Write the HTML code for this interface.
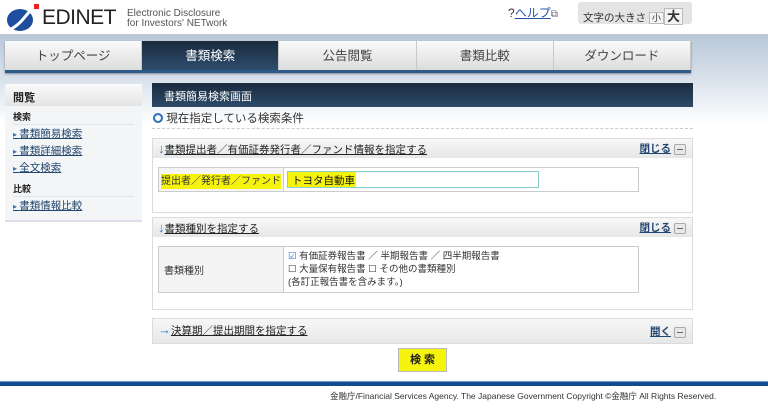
<!DOCTYPE html>
<html><head><meta charset="utf-8"><style>
*{margin:0;padding:0;box-sizing:border-box}
body{width:768px;height:419px;overflow:hidden;font-family:"Liberation Sans","Noto Sans CJK JP",sans-serif;background:#fff;position:relative;font-size:11px;color:#333}
.bg{position:absolute;left:0;top:35px;width:768px;height:90px;background:linear-gradient(#b9c8d9,#dde5ee 55%,#fff)}
.abs{position:absolute}
.hdr{position:absolute;left:0;top:0;width:768px;height:35px;background:#fff;border-bottom:1px solid #c8c8c8}
.nav{position:absolute;left:5px;top:41px;width:686px;height:32px;display:flex;border-bottom:3px solid #2d5a86;box-shadow:0 1px 2px #889}
.nav div{flex:1;text-align:center;line-height:30px;font-size:12.5px;color:#444;background:linear-gradient(#fafafa,#dcdcdc);border-right:1px solid #c9c9c9}
.nav div.on{background:linear-gradient(#1b2b3d,#2d4d6e);color:#fff}
.side{position:absolute;left:5px;top:84px;width:137px;height:138px;background:#f3f5f7;border-bottom:2px solid #dde}
.side .t{height:22px;background:linear-gradient(#fafafa,#e4e4e4);font-weight:bold;font-size:11px;padding:5px 8px;color:#222}
.side .h{font-size:9px;font-weight:bold;margin:4px 8px 0;border-bottom:1px solid #e2e4e6;padding-bottom:1px;color:#222}
.side a{display:block;font-size:10.5px;color:#23466e;text-decoration:underline;margin:2px 0 0 8px;line-height:14px}
.side a:before{content:"▸ ";color:#3a70b0;font-size:8px;text-decoration:none}
.title{position:absolute;left:152px;top:83px;width:541px;height:24px;background:linear-gradient(#1b2b3d,#2b4a69);color:#fff;font-size:11px;padding:5px 12px}
.box{position:absolute;left:152px;width:541px;border:1px solid #dcdcdc;background:#fff}
.bh{height:19px;background:linear-gradient(#f7f7f7,#e6e7e8);padding:2px 5px;font-size:10.5px;position:relative;white-space:nowrap}
.bh u{color:#222}
.bh .ar{color:#3a78c0;font-weight:bold;font-size:13px}
.cl{position:absolute;right:6px;top:2px;color:#23466e;font-weight:bold;font-size:10.5px;text-decoration:underline}
.mn{display:inline-block;width:12px;height:11px;border:1px solid #aaa;background:#e8e8e8;border-radius:2px;vertical-align:middle;margin-left:3px;position:relative}
.mn:after{content:"";position:absolute;left:2px;top:4px;width:6px;height:1px;background:#666}
table{border-collapse:collapse;position:absolute;left:5px}
td{border:1px solid #ccc;font-size:10px;color:#333;white-space:nowrap}
.hl{background:#f6f30c}
</style></head><body>
<div class="bg"></div>
<div class="hdr">
<svg class="abs" style="left:5px;top:3px" width="34" height="30"><ellipse cx="15" cy="17" rx="13" ry="11" fill="#1e4f9e"/><path d="M6 26 C14 22 20 14 24 9" stroke="#fff" stroke-width="3" fill="none"/><rect x="29" y="1" width="5" height="5" fill="#e22"/></svg>
<div class="abs" style="left:42px;top:6px;font-size:21px;color:#222;letter-spacing:-0.5px">EDINET</div>
<div class="abs" style="left:127px;top:9px;font-size:10px;line-height:10px;color:#555">Electronic Disclosure<br>for Investors' NETwork</div>
<div class="abs" style="left:508px;top:4px;font-size:12px;color:#333">?<u style="color:#2255aa">ヘルプ</u><span style="font-size:10px;color:#667">⧉</span></div>
<div class="abs" style="left:578px;top:2px;width:114px;height:22px;background:#e4e4e4;border-radius:3px;font-size:10.5px;padding:4px 5px;color:#333;white-space:nowrap">文字の大きさ <span style="border:1px solid #bbb;background:#f4f4f4;padding:0 2px;font-size:9px">小</span><span style="border:1px solid #bbb;background:#f4f4f4;padding:0 2px;font-size:13px;font-weight:bold">大</span></div>
</div>
<div class="nav"><div>トップページ</div><div class="on">書類検索</div><div>公告閲覧</div><div>書類比較</div><div>ダウンロード</div></div>
<div class="side"><div class="t">閲覧</div><div class="h">検索</div><a>書類簡易検索</a><a>書類詳細検索</a><a>全文検索</a><div class="h" style="margin-top:6px">比較</div><a>書類情報比較</a></div>
<div class="title">書類簡易検索画面</div>
<div class="abs" style="left:153px;top:110px;font-size:11.5px;color:#333"><span style="display:inline-block;width:10px;height:10px;border:2.5px solid #2c6fb8;border-radius:50%;vertical-align:-1px"></span> 現在指定している検索条件</div>
<div class="abs" style="left:152px;top:128px;width:541px;border-top:1px dashed #ccc"></div>
<div class="box" style="top:138px;height:75px"><div class="bh"><span class="ar">↓</span><u>書類提出者／有価証券発行者／ファンド情報を指定する</u><span class="cl">閉じる<span class="mn"></span></span></div>
<table style="top:28px;width:481px"><tr><td style="width:125px;height:24px;background:#f4f4f4;padding-left:2px"><span class="hl" style="padding:2px 0">提出者／発行者／ファンド</span></td><td style="padding-left:3px"><div style="width:252px;height:17px;border:1px solid #8cc;padding:1px 4px;font-size:10.5px;color:#111;background:linear-gradient(90deg,#f6f30c 68px,#fff 68px)">トヨタ自動車</div></td></tr></table></div>
<div class="box" style="top:217px;height:93px"><div class="bh"><span class="ar">↓</span><u>書類種別を指定する</u><span class="cl">閉じる<span class="mn"></span></span></div>
<table style="top:28px;width:481px"><tr><td style="width:125px;height:46px;background:#f4f4f4;padding-left:5px">書類種別</td><td style="padding:2px 4px;font-size:9.5px;line-height:13px"><span style="color:#2a6fd0">☑</span> 有価証券報告書 ／ 半期報告書 ／ 四半期報告書<br>☐ 大量保有報告書 ☐ その他の書類種別<br>(各訂正報告書を含みます。)</td></tr></table></div>
<div class="box" style="top:318px;height:26px"><div class="bh" style="height:24px;padding-top:3px"><span class="ar">→</span><u>決算期／提出期間を指定する</u><span class="cl" style="top:5px">開く<span class="mn"></span></span></div></div>
<div class="abs" style="left:398px;top:348px;width:49px;height:24px;border:1px solid #bbb;background:#f6f30c;font-size:11px;font-weight:bold;text-align:center;line-height:22px;color:#222">検 索</div>
<div class="abs" style="left:0;top:381px;width:768px;height:5px;background:#134c8c;border-top:1px solid #6a9ad0"></div>
<div class="abs" style="left:330px;top:390px;font-size:8.5px;color:#333;white-space:nowrap">金融庁/Financial Services Agency. The Japanese Government Copyright ©金融庁 All Rights Reserved.</div>
</body></html>
